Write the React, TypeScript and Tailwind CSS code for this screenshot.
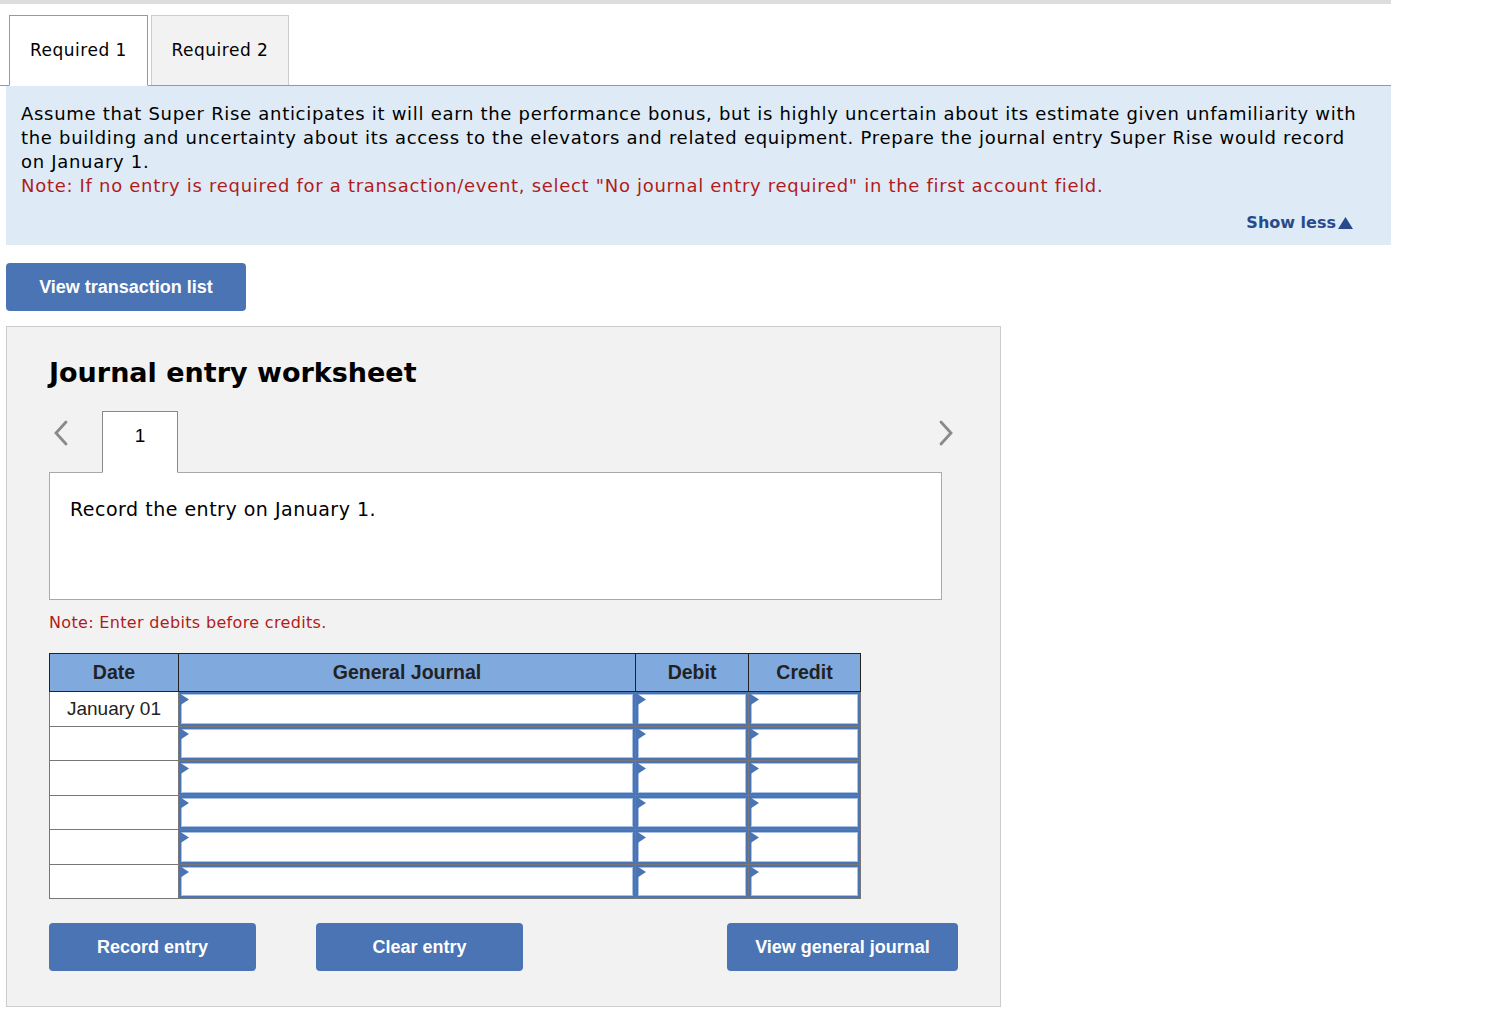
import React from 'react';

const verdana = { fontFamily: '"DejaVu Sans", Verdana, sans-serif' };
const arial = { fontFamily: '"Liberation Sans", Arial, sans-serif' };

const InputCell: React.FC = () => (
  <td className="h-[34.5px] border border-[#777] p-0 bg-white align-top">
    <div className="relative h-[33.5px] w-full border-2 border-[#4a74b4] shadow-[inset_0_0_0_1px_#a9c2e6] bg-white">
      <div className="absolute -left-[2px] -top-[1px] w-[10px] h-[13px] bg-[#4a74b4] [clip-path:polygon(0_0,100%_50%,0_100%)]" />
    </div>
  </td>
);

const BlueButton: React.FC<{ label: string; className?: string }> = ({ label, className }) => (
  <button
    className={`h-12 rounded bg-[#4a74b4] text-white font-bold text-[18px] ${className ?? ''}`}
    style={arial}
  >
    {label}
  </button>
);

export default function App() {
  const rows = ['January 01', '', '', '', '', ''];

  return (
    <div className="w-[1486px] min-h-[1036px] bg-white" style={verdana}>
      <div className="w-[1391px] h-1 bg-[#dddddd]" />

      {/* tabs */}
      <div className="flex items-end pl-[9px] pt-[11px] w-[1391px] border-b border-[#999]">
        <div className="w-[139px] h-[71px] -mb-px bg-white border border-[#999] border-b-white flex items-center justify-center text-[17px] tracking-[0.5px] text-black">
          Required 1
        </div>
        <div className="ml-[3px] w-[138px] h-[70px] bg-[#f2f2f2] border border-[#ccc] border-b-0 flex items-center justify-center text-[17px] tracking-[0.5px] text-black">
          Required 2
        </div>
      </div>

      {/* instructions */}
      <div className="ml-[6px] w-[1385px] bg-[#deebf7] pl-[15px] pr-[22px] pt-[16px] pb-[10px]">
        <p className="text-[18px] tracking-[0.7px] leading-6 text-black">
          Assume that Super Rise anticipates it will earn the performance bonus, but is highly uncertain about its estimate given unfamiliarity with the building and uncertainty about its access to the elevators and related equipment. Prepare the journal entry Super Rise would record on January 1.
        </p>
        <p className="text-[18px] tracking-[0.7px] leading-6 text-[#b01c1c]">
          Note: If no entry is required for a transaction/event, select "No journal entry required" in the first account field.
        </p>
        <div className="flex justify-end pr-[16px] mt-[13px]">
          <span className="text-[16px] font-bold text-[#294a8a] flex items-center gap-[2px]">
            Show less
            <svg width="15" height="12" viewBox="0 0 15 12">
              <path d="M7.5 0 L15 12 L0 12 Z" fill="#294a8a" />
            </svg>
          </span>
        </div>
      </div>

      <div className="ml-[6px] mt-[18px]">
        <BlueButton label="View transaction list" className="w-[240px]" />
      </div>

      {/* worksheet */}
      <div className="ml-[6px] mt-[15px] w-[995px] h-[681px] bg-[#f2f2f2] border border-[#cccccc] pl-[42px] pt-[28px]">
        <h2 className="text-[27px] font-bold text-black leading-9">Journal entry worksheet</h2>

        <div className="mt-[20px] flex items-end w-[893px] relative">
          <div className="w-[53px] h-[61px] flex items-start pt-[9px] pl-[4px]">
            <svg width="16" height="26" viewBox="0 0 16 26">
              <path d="M13 2 L3 13 L13 24" fill="none" stroke="#8a8a8a" strokeWidth="2.8" strokeLinecap="round" />
            </svg>
          </div>
          <div className="w-[76px] h-[62px] -mb-px z-10 bg-white border border-[#888] border-b-white flex items-start justify-center pt-[10px] text-[19px] text-black" style={arial}>
            1
          </div>
          <div className="flex-1" />
          <div className="absolute right-[-12px] top-[9px]">
            <svg width="16" height="26" viewBox="0 0 16 26">
              <path d="M3 2 L13 13 L3 24" fill="none" stroke="#8a8a8a" strokeWidth="2.8" strokeLinecap="round" />
            </svg>
          </div>
        </div>
        <div className="w-[893px] h-[128px] bg-white border border-[#aaa] px-[20px] pt-[22px]">
          <p className="text-[19px] tracking-[0.5px] text-black">Record the entry on January 1.</p>
        </div>

        <p className="mt-[11px] text-[16px] tracking-[0.33px] text-[#b01c1c]">Note: Enter debits before credits.</p>

        <table className="mt-[18px] border-collapse border border-[#666] w-[811px] table-fixed" style={arial}>
          <colgroup>
            <col className="w-[129px]" />
            <col className="w-[457px]" />
            <col className="w-[113px]" />
            <col className="w-[112px]" />
          </colgroup>
          <thead>
            <tr className="h-[38px] bg-[#80a9de] text-[19.5px] text-[#222]">
              <th className="border border-[#222] font-bold">Date</th>
              <th className="border border-[#222] font-bold">General Journal</th>
              <th className="border border-[#222] font-bold">Debit</th>
              <th className="border border-[#222] font-bold">Credit</th>
            </tr>
          </thead>
          <tbody>
            {rows.map((d, i) => (
              <tr key={i} className="h-[34.5px]">
                <td className="border border-[#777] bg-white text-center text-[19px] text-[#222] p-0">{d}</td>
                <InputCell />
                <InputCell />
                <InputCell />
              </tr>
            ))}
          </tbody>
        </table>

        <div className="mt-[24px] flex w-[909px]">
          <BlueButton label="Record entry" className="w-[207px]" />
          <BlueButton label="Clear entry" className="w-[207px] ml-[60px]" />
          <div className="flex-1" />
          <BlueButton label="View general journal" className="w-[231px]" />
        </div>
      </div>
    </div>
  );
}
